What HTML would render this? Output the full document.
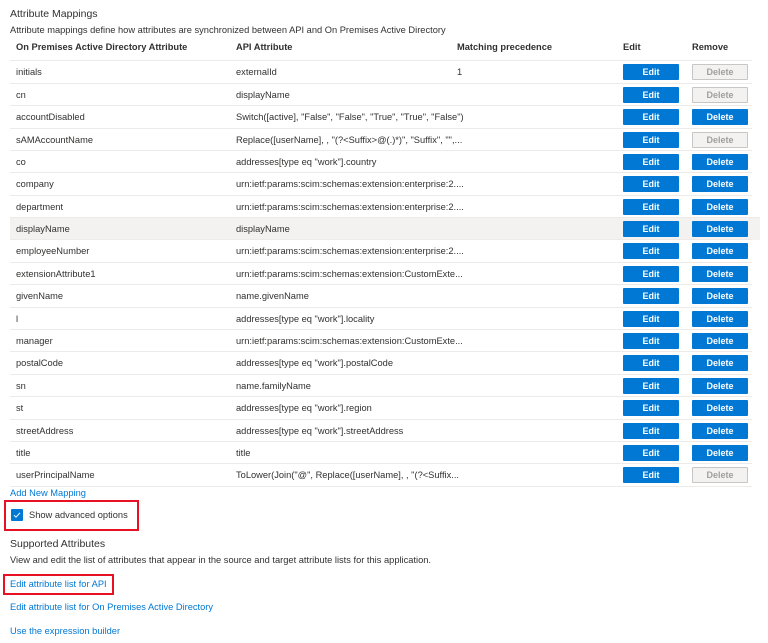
<!DOCTYPE html>
<html><head><meta charset="utf-8"><style>
body{margin:0;width:768px;height:643px;background:#fff;font-family:"Liberation Sans",sans-serif;font-size:9.3px;color:#323130;position:relative;overflow:hidden}
.a{position:absolute;white-space:nowrap}
.row{position:absolute;left:10px;width:742px;height:22px;border-top:1px solid #edebe9}
.row span{position:absolute;top:6px}
.c1{left:6px}.c2{left:226px}.c3{left:447px}
.b{position:absolute;top:3px;width:56px;height:16px;background:#0078d4;color:#fff;font-weight:bold;text-align:center;line-height:16px;font-size:9px;border-radius:1px}
.e{left:613px}.d{left:682px}
.dis{background:#f3f2f1;color:#a19f9d;border:1px solid #c8c6c4;height:14px;width:54px;line-height:14px}
.hl{background:#f3f2f1;width:750px}
.lnk{color:#0078d4}
.red{position:absolute;border:2px solid #e81123}
</style></head><body>
<div class="a" style="left:10px;top:8px;font-size:10.5px">Attribute Mappings</div>
<div class="a" style="left:10px;top:25px">Attribute mappings define how attributes are synchronized between API and On Premises Active Directory</div>
<div class="a" style="left:16px;top:42px;font-weight:bold">On Premises Active Directory Attribute</div>
<div class="a" style="left:236px;top:42px;font-weight:bold">API Attribute</div>
<div class="a" style="left:457px;top:42px;font-weight:bold">Matching precedence</div>
<div class="a" style="left:623px;top:42px;font-weight:bold">Edit</div>
<div class="a" style="left:692px;top:42px;font-weight:bold">Remove</div>

<div class="row" style="top:60px"><span class="c1">initials</span><span class="c2">externalId</span><span class="c3">1</span><div class="b e">Edit</div><div class="b d dis">Delete</div></div>
<div class="row" style="top:83px"><span class="c1">cn</span><span class="c2">displayName</span><div class="b e">Edit</div><div class="b d dis">Delete</div></div>
<div class="row" style="top:105px"><span class="c1">accountDisabled</span><span class="c2">Switch([active], "False", "False", "True", "True", "False")</span><div class="b e">Edit</div><div class="b d">Delete</div></div>
<div class="row" style="top:128px"><span class="c1">sAMAccountName</span><span class="c2">Replace([userName], , "(?&lt;Suffix&gt;@(.)*)", "Suffix", "",...</span><div class="b e">Edit</div><div class="b d dis">Delete</div></div>
<div class="row" style="top:150px"><span class="c1">co</span><span class="c2">addresses[type eq "work"].country</span><div class="b e">Edit</div><div class="b d">Delete</div></div>
<div class="row" style="top:172px"><span class="c1">company</span><span class="c2">urn:ietf:params:scim:schemas:extension:enterprise:2....</span><div class="b e">Edit</div><div class="b d">Delete</div></div>
<div class="row" style="top:195px"><span class="c1">department</span><span class="c2">urn:ietf:params:scim:schemas:extension:enterprise:2....</span><div class="b e">Edit</div><div class="b d">Delete</div></div>
<div class="row hl" style="top:217px"><span class="c1">displayName</span><span class="c2">displayName</span><div class="b e">Edit</div><div class="b d">Delete</div></div>
<div class="row" style="top:239px"><span class="c1">employeeNumber</span><span class="c2">urn:ietf:params:scim:schemas:extension:enterprise:2....</span><div class="b e">Edit</div><div class="b d">Delete</div></div>
<div class="row" style="top:262px"><span class="c1">extensionAttribute1</span><span class="c2">urn:ietf:params:scim:schemas:extension:CustomExte...</span><div class="b e">Edit</div><div class="b d">Delete</div></div>
<div class="row" style="top:284px"><span class="c1">givenName</span><span class="c2">name.givenName</span><div class="b e">Edit</div><div class="b d">Delete</div></div>
<div class="row" style="top:307px"><span class="c1">l</span><span class="c2">addresses[type eq "work"].locality</span><div class="b e">Edit</div><div class="b d">Delete</div></div>
<div class="row" style="top:329px"><span class="c1">manager</span><span class="c2">urn:ietf:params:scim:schemas:extension:CustomExte...</span><div class="b e">Edit</div><div class="b d">Delete</div></div>
<div class="row" style="top:351px"><span class="c1">postalCode</span><span class="c2">addresses[type eq "work"].postalCode</span><div class="b e">Edit</div><div class="b d">Delete</div></div>
<div class="row" style="top:374px"><span class="c1">sn</span><span class="c2">name.familyName</span><div class="b e">Edit</div><div class="b d">Delete</div></div>
<div class="row" style="top:396px"><span class="c1">st</span><span class="c2">addresses[type eq "work"].region</span><div class="b e">Edit</div><div class="b d">Delete</div></div>
<div class="row" style="top:419px"><span class="c1">streetAddress</span><span class="c2">addresses[type eq "work"].streetAddress</span><div class="b e">Edit</div><div class="b d">Delete</div></div>
<div class="row" style="top:441px"><span class="c1">title</span><span class="c2">title</span><div class="b e">Edit</div><div class="b d">Delete</div></div>
<div class="row" style="top:463px;border-bottom:1px solid #edebe9"><span class="c1">userPrincipalName</span><span class="c2">ToLower(Join("@", Replace([userName], , "(?&lt;Suffix...</span><div class="b e">Edit</div><div class="b d dis">Delete</div></div>

<div class="a lnk" style="left:10px;top:488px">Add New Mapping</div>
<div class="red" style="left:4px;top:500px;width:131px;height:27px"></div>
<div class="a" style="left:11px;top:509px;width:12px;height:12px;background:#0078d4;border-radius:1px"><svg width="12" height="12" viewBox="0 0 12 12"><path d="M3 6.2l2 2 4-4.4" stroke="#fff" stroke-width="1" fill="none"/></svg></div>
<div class="a" style="left:29px;top:510px">Show advanced options</div>
<div class="a" style="left:10px;top:538px;font-size:10.5px">Supported Attributes</div>
<div class="a" style="left:10px;top:555px">View and edit the list of attributes that appear in the source and target attribute lists for this application.</div>
<div class="red" style="left:3px;top:574px;width:107px;height:17px"></div>
<div class="a lnk" style="left:10px;top:579px">Edit attribute list for API</div>
<div class="a lnk" style="left:10px;top:602px">Edit attribute list for On Premises Active Directory</div>
<div class="a lnk" style="left:10px;top:626px">Use the expression builder</div>
</body></html>
